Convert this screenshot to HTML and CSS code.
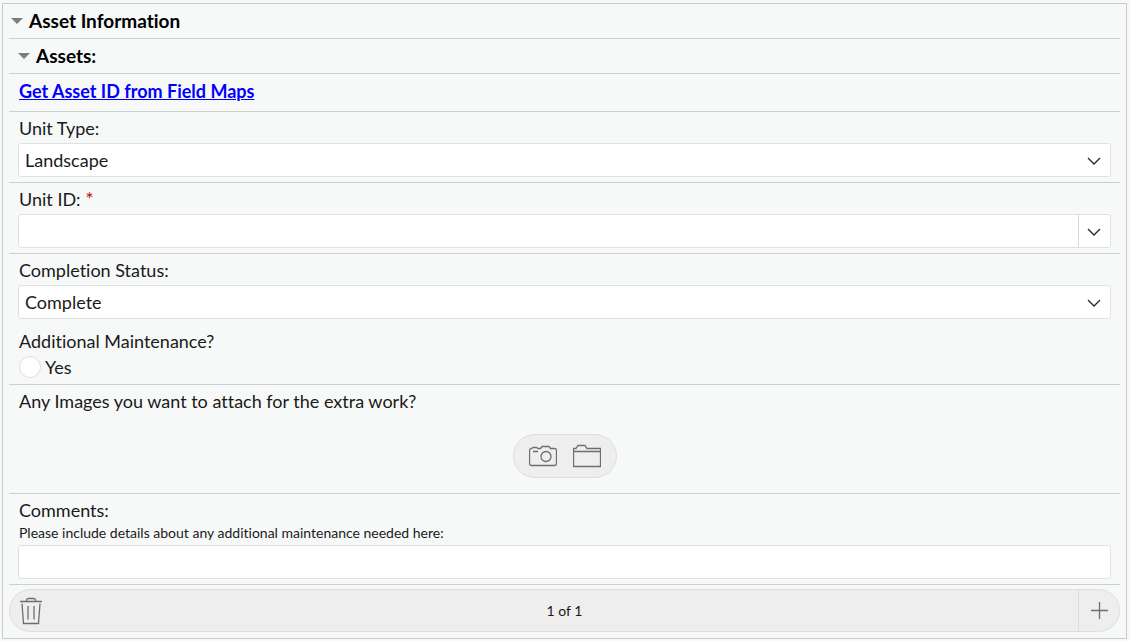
FILE: index.html
```
<!DOCTYPE html>
<html lang="en">
<head>
  <meta charset="UTF-8" />
  <meta name="viewport" content="width=device-width, initial-scale=1.0"/>
  <title>Asset Information</title>
  <link rel="stylesheet" href="styles.css">
</head>
<body>
  <form class="panel">
    <!-- Group headers -->
    <h2 class="group-header">
      <button type="button" class="toggle" aria-expanded="true"><span class="caret"></span>Asset Information</button>
    </h2>
    <h3 class="group-header nested">
      <button type="button" class="toggle" aria-expanded="true"><span class="caret"></span>Assets:</button>
    </h3>

    <div class="row link-row">
      <a class="map-link" href="#">Get Asset ID from Field Maps</a>
    </div>

    <div class="row">
      <label class="label" for="unit-type">Unit Type:</label>
      <div class="control">
        <select id="unit-type" class="input">
          <option>Landscape</option>
        </select>
        <svg class="chevron" viewBox="0 0 14 8" aria-hidden="true"><path d="M1 1l6 6 6-6"/></svg>
      </div>
    </div>

    <div class="row">
      <label class="label" for="unit-id">Unit ID: <span class="required">*</span></label>
      <div class="combo">
        <input id="unit-id" class="combo-input" type="text" required>
        <button type="button" class="combo-button" aria-label="Show units">
          <svg class="chevron-icon" viewBox="0 0 14 8" aria-hidden="true"><path d="M1 1l6 6 6-6"/></svg>
        </button>
      </div>
    </div>

    <div class="row no-line">
      <label class="label" for="status">Completion Status:</label>
      <div class="control">
        <select id="status" class="input">
          <option>Complete</option>
        </select>
        <svg class="chevron" viewBox="0 0 14 8" aria-hidden="true"><path d="M1 1l6 6 6-6"/></svg>
      </div>
    </div>

    <fieldset class="row">
      <legend class="label">Additional Maintenance?</legend>
      <label class="choice" for="extra-yes">
        <input id="extra-yes" class="radio" type="radio" name="extra">
        Yes
      </label>
    </fieldset>

    <div class="row image-row">
      <p class="label">Any Images you want to attach for the extra work?</p>
      <div class="image-buttons">
        <button type="button" class="icon-button" aria-label="Take photo">
          <svg class="media-icon" viewBox="0 0 28 24" aria-hidden="true">
            <path d="M2.500 4.500L4 3.500h3.500L9 4.500h2.500L13 2.500h7l1.500 2H25.500a2 2 0 0 1 2 2V19.500a2 2 0 0 1-2 2H2.500a2 2 0 0 1-2-2V6.500a2 2 0 0 1 2-2zM4 7.500h5"/>
            <circle cx="17" cy="12.500" r="5"/>
          </svg>
        </button>
        <button type="button" class="icon-button" aria-label="Select image">
          <svg class="media-icon" viewBox="0 0 28 24" aria-hidden="true">
            <path d="M.5 22.500V4.500h2.500l2-3h7l2 3h13.500v18zM.5 7.500h27"/>
          </svg>
        </button>
      </div>
    </div>

    <div class="row">
      <label class="label" for="comments">Comments:</label>
      <p class="hint" id="comments-hint">Please include details about any additional maintenance needed here:</p>
      <div class="control">
        <input id="comments" class="input" type="text" aria-describedby="comments-hint">
      </div>
    </div>

    <!-- Repeat navigation -->
    <div class="repeat-bar">
      <button type="button" class="bar-button delete" aria-label="Delete record">
        <svg class="trash-icon" viewBox="0 0 22 28" aria-hidden="true">
          <path d="M0 4.500h22M6.500 4V2.500l1.500-1h6l1.500 1V4M2 6.500l1.500 20h15L20 6.500M8 9v13.500M14 9v13.500"/>
        </svg>
      </button>
      <span class="count">1 of 1</span>
      <button type="button" class="bar-button add" aria-label="Add record">
        <svg class="plus-icon" viewBox="0 0 17 17" aria-hidden="true"><path d="M8.500 0v17M0 8.500h17"/></svg>
      </button>
    </div>
  </form>
</body>
</html>
```
FILE: styles.css
```
* {
  box-sizing: border-box;
}

body {
  font-family: Lato, "Open Sans", sans-serif;
  font-size: 18px;
  line-height: 24px;
  font-variant-ligatures: none;
  background-color: #f7f9f8;
  color: #1a1a1a;
  margin: 0;
  padding: 3px 3px 2px 2px;
}

button,
input,
select {
  font: inherit;
  font-variant-ligatures: none;
  color: inherit;
}

button {
  background: none;
  border: none;
  margin: 0;
  padding: 0;
  cursor: pointer;
}

svg {
  display: block;
  fill: none;
  stroke: #6e6e6e;
  stroke-width: 1.3;
}

.panel {
  border: 1px solid #c8cccb;
  padding: 0 6px;
}

.group-header {
  margin: 0;
  padding: 5px 2px;
  font-size: 19px;
  font-weight: bold;
  color: #000;
  border-bottom: 1px solid #cbcfce;
}

.nested {
  padding-left: 9px;
}

.toggle {
  display: flex;
  align-items: center;
  gap: 6px;
}

.caret {
  border: 6px solid transparent;
  border-top-color: #7c7c7c;
  border-bottom: 0;
}

.row {
  margin: 0;
  padding: 4px 9px 5px;
  border: 0;
  border-bottom: 1px solid #cbcfce;
}

.link-row {
  padding: 5px 10px 8px;
}

.map-link {
  display: block;
  width: fit-content;
  font-weight: bold;
  color: #00f;
}

.no-line {
  padding-bottom: 6px;
  border-bottom: 0;
}

.label {
  display: block;
  margin: 0 0 3px;
  padding: 0 1px;
}

.required {
  color: #b8121b;
  font-size: 20px;
  line-height: 20px;
}

.control {
  position: relative;
}

.input {
  display: block;
  width: 100%;
  height: 34px;
  padding: 0 6px 1px;
  appearance: none;
  background-color: #fff;
  border: 1px solid #e0e2e2;
  border-radius: 3px;
}

.chevron {
  position: absolute;
  top: 14px;
  right: 10px;
  width: 14px;
  height: 8px;
  stroke: #2b2323;
  pointer-events: none;
}

.combo {
  display: flex;
  height: 34px;
  background-color: #fff;
  border: 1px solid #e0e2e2;
  border-radius: 3px;
}

.combo-input {
  flex: 1;
  min-width: 0;
  padding: 0 6px;
  background: none;
  border: 0;
}

.combo-button {
  display: flex;
  align-items: center;
  justify-content: center;
  width: 32px;
  padding: 1px 1px 0 0;
  border-left: 1px solid #d8dada;
}

.chevron-icon {
  width: 14px;
  height: 8px;
  stroke: #2b2323;
}

.choice {
  display: flex;
  align-items: center;
  gap: 4px;
  width: fit-content;
  padding-left: 1px;
}

fieldset.row {
  padding-bottom: 5px;
}

fieldset .label {
  /* a legend ignores the fieldset's top padding */
  padding-top: 4px;
  margin-bottom: -2px;
}

.radio {
  width: 22px;
  height: 22px;
  margin: 0;
  appearance: none;
  background-color: #fff;
  border: 1px solid #dcdfde;
  border-radius: 50%;
}

.image-row {
  padding-bottom: 15px;
}

.image-buttons {
  display: flex;
  gap: 16px;
  width: fit-content;
  margin: 21px auto 0;
  padding: 9px 15px;
  background-color: #eee;
  border: 1px solid #dcdfde;
  border-radius: 22px;
}

.media-icon {
  width: 28px;
  height: 24px;
}

.hint {
  margin: -2px 0 2px;
  padding: 0 1px;
  font-size: 14px;
  line-height: 20px;
}

.repeat-bar {
  display: flex;
  align-items: center;
  height: 43px;
  margin: 4px 0 6px;
  background-color: #eee;
  border: 1px solid #dcdfde;
  border-radius: 22px;
}

.bar-button {
  display: flex;
  align-items: center;
  justify-content: center;
  width: 41px;
  height: 100%;
}

.trash-icon {
  width: 22px;
  height: 28px;
}

.plus-icon {
  width: 17px;
  height: 17px;
}

.add {
  border-left: 1px solid #dcdfde;
}

.count {
  flex: 1;
  font-size: 14px;
  text-align: center;
}
```
